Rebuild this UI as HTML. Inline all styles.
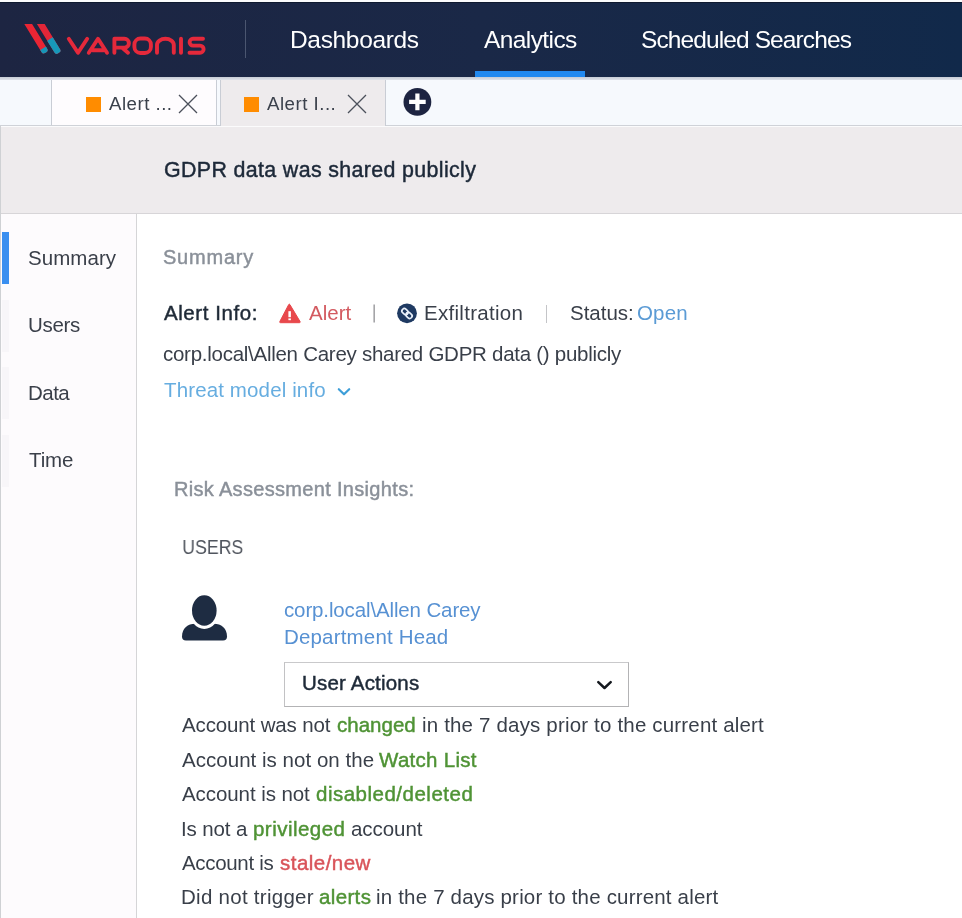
<!DOCTYPE html>
<html><head><meta charset="utf-8">
<style>
html,body{margin:0;padding:0;width:962px;height:918px;overflow:hidden;background:#fff}
body{position:relative;font-family:"Liberation Sans",sans-serif}
.t{position:absolute;white-space:pre;line-height:1;-webkit-font-smoothing:antialiased;will-change:transform;font-family:"Liberation Sans",sans-serif}
.b{position:absolute}
</style></head><body>
<div class="b" style="left:0;top:0;width:962px;height:2px;background:#fbfcfd"></div>
<div class="b" style="left:0;top:2px;width:962px;height:75px;background:linear-gradient(90deg,#1d2542 0%,#1a2847 50%,#11294a 100%)"></div>
<div class="b" style="left:0;top:2px;width:962px;height:1px;background:#0f1a30"></div>
<div class="b" style="left:245px;top:20px;width:1px;height:38px;background:#4b5670"></div>
<div class="b" style="left:475px;top:71px;width:110px;height:6px;background:#2189f0"></div>
<!-- tab strip -->
<div class="b" style="left:0;top:77px;width:962px;height:49px;background:#f6f9fd"></div>
<div class="b" style="left:0;top:77px;width:962px;height:3px;background:linear-gradient(#c6cbd5,#dfe3ea)"></div>
<div class="b" style="left:0;top:125px;width:962px;height:1px;background:#cfd2d8"></div>
<div class="b" style="left:51px;top:80px;width:164px;height:45px;background:#fefcfe;border-left:1px solid #c9cdd5;border-right:1px solid #c9cdd5"></div>
<div class="b" style="left:220px;top:80px;width:164px;height:47px;background:#eeebed;border-left:1px solid #c9cdd5;border-right:1px solid #c9cdd5"></div>
<div class="b" style="left:86px;top:97px;width:15px;height:15px;background:#ff8c00"></div>
<div class="b" style="left:244px;top:97px;width:15px;height:15px;background:#ff8c00"></div>
<svg class="b" style="left:176px;top:92px" width="24" height="24"><path d="M3 3L21 21M21 3L3 21" stroke="#4b505b" stroke-width="1.3"/></svg>
<svg class="b" style="left:345px;top:92px" width="24" height="24"><path d="M3 3L21 21M21 3L3 21" stroke="#4b505b" stroke-width="1.3"/></svg>
<svg class="b" style="left:403px;top:88px" width="29" height="29"><circle cx="14.4" cy="13.9" r="13.9" fill="#1d2441"/><path d="M14.4 5.6V22.2M6.1 13.9H22.7" stroke="#fff" stroke-width="4.2"/></svg>
<!-- header -->
<div class="b" style="left:0;top:126px;width:962px;height:87px;background:#eeebed"></div>
<div class="b" style="left:0;top:126px;width:962px;height:1px;background:#fbfbfc"></div>
<div class="b" style="left:0;top:213px;width:962px;height:1px;background:#d7d5d8"></div>
<!-- sidebar -->
<div class="b" style="left:0;top:214px;width:136px;height:704px;background:#fdfbfd"></div>
<div class="b" style="left:136px;top:214px;width:1px;height:704px;background:#d5d5d7"></div>
<div class="b" style="left:0;top:126px;width:1px;height:792px;background:#cfd1d4"></div>
<div class="b" style="left:2px;top:232px;width:7px;height:52px;background:#3a8ff0"></div>
<!-- logo -->
<svg class="b" style="left:0;top:0" width="220" height="77" viewBox="0 0 220 77">
<defs><clipPath id="lc"><rect x="0" y="24" width="220" height="40"/></clipPath></defs>
<g clip-path="url(#lc)">
<g transform="translate(28.2,24) rotate(-31.5)"><rect x="-3.3" y="-6" width="6.6" height="39.5" rx="2.5" fill="#ea2534"/><path d="M-3.3 28.5H3.3V31a2.5 2.5 0 0 1-2.5 2.5H-0.8a2.5 2.5 0 0 1-2.5-2.5z" fill="#1796b8"/></g>
<g transform="translate(40.8,24) rotate(-31.5)"><rect x="-3.3" y="-6" width="6.6" height="40" rx="2.5" fill="#e22638"/><path d="M-3.3 17.5H3.3V31.5a2.5 2.5 0 0 1-2.5 2.5H-0.8a2.5 2.5 0 0 1-2.5-2.5z" fill="#1798ba"/></g>
</g>
<g fill="none" stroke="#e5293b" stroke-width="3.9" stroke-linecap="round" stroke-linejoin="round">
<path d="M68.8 38.8L78 52.8L87.2 38.8"/>
<path d="M88.8 52.8L98 38.8L107 52.8M92.5 50.2H103.5"/>
<path d="M114.4 52.8V38.8H124.5a4.4 4.4 0 0 1 0 8.8H114.4M122.5 48L128 52.8"/>
<rect x="134.4" y="38.5" width="16.5" height="14.5" rx="6"/>
<path d="M157 52.8V45a8.4 6.2 0 0 1 16.8 0V52.8"/>
<path d="M181 38.8V52.8"/>
<path d="M203 38.8H193a3.4 3.4 0 0 0-3.4 3.4v0a3.4 3.4 0 0 0 3.4 3.4H200a3.6 3.6 0 0 1 3.6 3.6v0a3.6 3.6 0 0 1-3.6 3.6H189.5"/>
</g>
</svg>
<!-- alert info icons -->
<svg class="b" style="left:270px;top:295px" width="160" height="36" viewBox="270 295 160 36">
<path transform="translate(0.5,0)" d="M289.4 304.6L299.6 321.6a0.8 0.8 0 0 1-0.7 1.1H280a0.8 0.8 0 0 1-0.7-1.1L288.2 304.6a0.7 0.7 0 0 1 1.2 0z" fill="#e8484c" stroke="#e8484c" stroke-width="1" stroke-linejoin="round"/>
<rect x="288.4" y="311.2" width="2.5" height="6" fill="#fff"/>
<rect x="288.4" y="318.4" width="2.5" height="1.8" fill="#fff"/>
<rect x="373.5" y="304.5" width="1.3" height="18" fill="#8f9093"/>
<circle cx="407" cy="313.3" r="9.9" fill="#1f3a62"/>
<g transform="translate(407,313.5) rotate(43)" fill="none" stroke="#e9f0fa" stroke-width="1.7">
<rect x="-6" y="-2.4" width="6.6" height="4.8" rx="2.2"/>
<rect x="-0.6" y="-2.4" width="6.6" height="4.8" rx="2.2"/>
</g>
</svg>
<div class="b" style="left:546px;top:305px;width:1px;height:18px;background:#c4c5c8"></div>
<svg class="b" style="left:330px;top:380px" width="30" height="22" viewBox="330 380 30 22"><path d="M338.8 389.2L344 394.3L349.2 389.2" fill="none" stroke="#3d9ed8" stroke-width="2.2" stroke-linecap="round" stroke-linejoin="round"/></svg>
<!-- user -->
<svg class="b" style="left:176px;top:590px" width="58" height="56" viewBox="176 590 58 56">
<path d="M182 636.5C182 628 188 623.8 195 623.8H214C221 623.8 227 628 227 636.5Q227 640.6 223 640.6H186Q182 640.6 182 636.5Z" fill="#1e2c42"/>
<ellipse cx="204.3" cy="610.6" rx="15.3" ry="18.3" fill="#fff"/>
<ellipse cx="204.3" cy="610.5" rx="12.3" ry="15.3" fill="#1e2c42"/>
</svg>
<!-- dropdown -->
<div class="b" style="left:284px;top:662px;width:343px;height:43px;border:1px solid #b3b3b5;border-top-color:#c9c9cb;border-left-color:#c2c2c4;background:#fff"></div>
<svg class="b" style="left:590px;top:672px" width="30" height="26" viewBox="590 672 30 26"><path d="M598.3 682.2L604.5 688L610.7 682.2" fill="none" stroke="#15191f" stroke-width="2.5" stroke-linecap="round" stroke-linejoin="round"/></svg>
<div class="b" style="left:2px;top:300px;width:7px;height:52px;background:#f8f6f9"></div>
<div class="b" style="left:2px;top:367px;width:7px;height:52px;background:#f8f6f9"></div>
<div class="b" style="left:2px;top:435px;width:7px;height:52px;background:#f8f6f9"></div>

<div class="t" style="left:289.7px;top:28.0px;font-size:24.5px;font-weight:400;color:#ffffff;letter-spacing:-0.333px">Dashboards</div>
<div class="t" style="left:483.5px;top:28.0px;font-size:24.5px;font-weight:400;color:#ffffff;letter-spacing:-0.588px">Analytics</div>
<div class="t" style="left:641.0px;top:28.0px;font-size:24.5px;font-weight:400;color:#ffffff;letter-spacing:-0.894px">Scheduled Searches</div>
<div class="t" style="left:108.6px;top:94.8px;font-size:18.7px;font-weight:400;color:#3b414c;letter-spacing:0.475px">Alert ...</div>
<div class="t" style="left:267.1px;top:94.8px;font-size:18.7px;font-weight:400;color:#3b414c;letter-spacing:0.489px">Alert I...</div>
<div class="t" style="left:163.8px;top:160.0px;font-size:21.4px;font-weight:400;color:#1c2838;letter-spacing:0.354px;-webkit-text-stroke:0.45px #1c2838">GDPR data was shared publicly</div>
<div class="t" style="left:27.8px;top:248.0px;font-size:20.5px;font-weight:400;color:#3a3f49;letter-spacing:0.067px">Summary</div>
<div class="t" style="left:28.3px;top:315.0px;font-size:20.5px;font-weight:400;color:#3a3f49;letter-spacing:-0.325px">Users</div>
<div class="t" style="left:28.0px;top:383.0px;font-size:20.5px;font-weight:400;color:#3a3f49;letter-spacing:-0.533px">Data</div>
<div class="t" style="left:29.0px;top:450.0px;font-size:20.5px;font-weight:400;color:#3a3f49;letter-spacing:-0.100px">Time</div>
<div class="t" style="left:163.3px;top:247.0px;font-size:20px;font-weight:400;color:#8a9099;letter-spacing:0.783px;-webkit-text-stroke:0.45px #8a9099">Summary</div>
<div class="t" style="left:164.0px;top:303.0px;font-size:20.5px;font-weight:400;color:#1f2a37;letter-spacing:0.560px;-webkit-text-stroke:0.45px #1f2a37">Alert Info:</div>
<div class="t" style="left:308.6px;top:303.0px;font-size:20.5px;font-weight:400;color:#d35a60;letter-spacing:0.025px">Alert</div>
<div class="t" style="left:424.4px;top:303.0px;font-size:20.5px;font-weight:400;color:#393f49;letter-spacing:0.291px">Exfiltration</div>
<div class="t" style="left:570.0px;top:303.0px;font-size:20.5px;font-weight:400;color:#393f49;letter-spacing:0.000px">Status:</div>
<div class="t" style="left:636.5px;top:303.0px;font-size:20.5px;font-weight:400;color:#5b9bd5;letter-spacing:0.167px">Open</div>
<div class="t" style="left:163.4px;top:344.0px;font-size:20.5px;font-weight:400;color:#393f49;letter-spacing:-0.268px">corp.local\Allen Carey shared GDPR data () publicly</div>
<div class="t" style="left:164.4px;top:380.0px;font-size:20.5px;font-weight:400;color:#66ade0;letter-spacing:0.131px">Threat model info</div>
<div class="t" style="left:174.3px;top:479.0px;font-size:20px;font-weight:400;color:#8a9099;letter-spacing:0.321px;-webkit-text-stroke:0.45px #8a9099">Risk Assessment Insights:</div>
<div class="t" style="left:181.6px;top:536.0px;font-size:21px;font-weight:400;color:#50555e;letter-spacing:0.000px;transform:scaleX(0.8451);transform-origin:1px 0">USERS</div>
<div class="t" style="left:283.6px;top:600.0px;font-size:20.5px;font-weight:400;color:#5791d3;letter-spacing:-0.133px">corp.local\Allen Carey</div>
<div class="t" style="left:283.6px;top:626.7px;font-size:20.5px;font-weight:400;color:#5791d3;letter-spacing:0.171px">Department Head</div>
<div class="t" style="left:301.8px;top:673.0px;font-size:20.5px;font-weight:400;color:#1e2a38;letter-spacing:0.191px;-webkit-text-stroke:0.45px #1e2a38">User Actions</div>
<div class="t" style="left:181.9px;top:714.5px;font-size:20.5px;font-weight:400;color:#393f49;letter-spacing:-0.136px">Account was not</div>
<div class="t" style="left:336.9px;top:714.5px;font-size:20.5px;font-weight:400;color:#4f9335;letter-spacing:0.017px;-webkit-text-stroke:0.45px #4f9335">changed</div>
<div class="t" style="left:421.5px;top:714.5px;font-size:20.5px;font-weight:400;color:#393f49;letter-spacing:0.174px">in the 7 days prior to the current alert</div>
<div class="t" style="left:181.9px;top:749.5px;font-size:20.5px;font-weight:400;color:#393f49;letter-spacing:0.030px">Account is not on the</div>
<div class="t" style="left:378.7px;top:749.5px;font-size:20.5px;font-weight:400;color:#4f9335;letter-spacing:0.289px;-webkit-text-stroke:0.45px #4f9335">Watch List</div>
<div class="t" style="left:181.9px;top:783.5px;font-size:20.5px;font-weight:400;color:#393f49;letter-spacing:-0.077px">Account is not</div>
<div class="t" style="left:315.5px;top:783.5px;font-size:20.5px;font-weight:400;color:#4f9335;letter-spacing:0.500px;-webkit-text-stroke:0.45px #4f9335">disabled/deleted</div>
<div class="t" style="left:181.0px;top:818.5px;font-size:20.5px;font-weight:400;color:#393f49;letter-spacing:-0.129px">Is not a</div>
<div class="t" style="left:253.4px;top:818.5px;font-size:20.5px;font-weight:400;color:#4f9335;letter-spacing:0.467px;-webkit-text-stroke:0.45px #4f9335">privileged</div>
<div class="t" style="left:350.9px;top:818.5px;font-size:20.5px;font-weight:400;color:#393f49;letter-spacing:-0.050px">account</div>
<div class="t" style="left:182.2px;top:852.5px;font-size:20.5px;font-weight:400;color:#393f49;letter-spacing:-0.322px">Account is</div>
<div class="t" style="left:280.0px;top:852.5px;font-size:20.5px;font-weight:400;color:#d9545a;letter-spacing:0.475px;-webkit-text-stroke:0.45px #d9545a">stale/new</div>
<div class="t" style="left:181.2px;top:887.0px;font-size:20.5px;font-weight:400;color:#393f49;letter-spacing:0.271px">Did not trigger</div>
<div class="t" style="left:319.0px;top:887.0px;font-size:20.5px;font-weight:400;color:#4f9335;letter-spacing:0.360px;-webkit-text-stroke:0.45px #4f9335">alerts</div>
<div class="t" style="left:376.2px;top:887.0px;font-size:20.5px;font-weight:400;color:#393f49;letter-spacing:0.185px">in the 7 days prior to the current alert</div>
</body></html>
